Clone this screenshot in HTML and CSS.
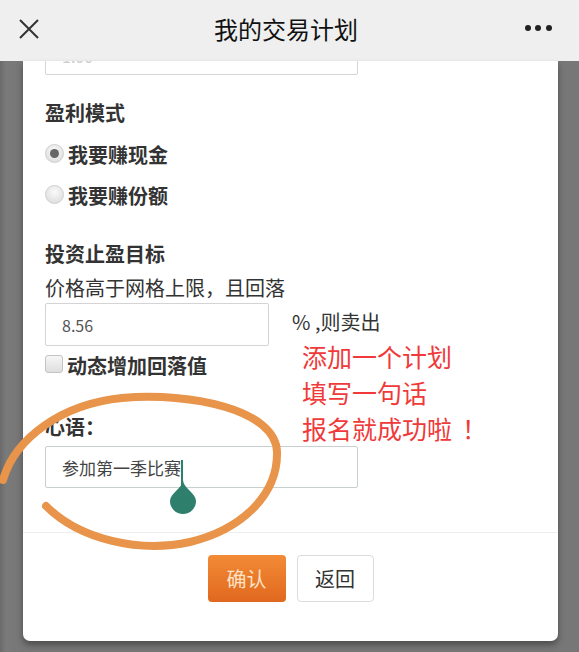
FILE: index.html
```html
<!DOCTYPE html>
<html lang="zh-CN">
<head>
  <meta charset="UTF-8" />
  <title>我的交易计划</title>
  <link rel="stylesheet" href="styles.css">
</head>
<body>
  <div class="page">

    <!-- 顶部导航 -->
    <header class="topbar">
      <svg class="icon-close" width="20" height="20" viewBox="0 0 20 20">
        <path d="M1 1 L19 19 M19 1 L1 19" stroke="#333" stroke-width="2" fill="none" />
      </svg>
      <div class="topbar-title">我的交易计划</div>
      <svg class="icon-more" width="28" height="8" viewBox="0 0 28 8">
        <circle cx="3" cy="4" r="3" fill="#222" />
        <circle cx="13" cy="4" r="3" fill="#222" />
        <circle cx="24" cy="4" r="3" fill="#222" />
      </svg>
    </header>

    <div class="stage">
      <div class="sheet">
        <div class="form">
          <div class="field field-wide field-top">1.00</div>

          <div class="label">盈利模式</div>
          <div class="choice-list">
            <div class="choice"><span class="radio radio-on"></span>我要赚现金</div>
            <div class="choice"><span class="radio"></span>我要赚份额</div>
          </div>

          <div class="label label-gap">投资止盈目标</div>
          <div class="hint">价格高于网格上限，且回落</div>
          <div class="price-row">
            <div class="field field-price">8.56</div>
            <span class="unit">% ,则卖出</span>
          </div>
          <div class="choice choice-check"><span class="check"></span>动态增加回落值</div>

          <div class="label label-gap2">心语：</div>
          <div class="field field-wide field-note">参加第一季比赛<span class="caret"></span></div>
        </div>

        <div class="actions">
          <button class="btn btn-ok">确认</button>
          <button class="btn btn-back">返回</button>
        </div>
      </div>
    </div>

    <!-- 标注 -->
    <div class="note">
      添加一个计划<br>
      填写一句话<br>
      报名就成功啦<span class="bang">！</span>
    </div>
    <svg class="ring" width="290" height="165" viewBox="0 390 290 165">
      <path d="M3 480 C 15 438, 62 404, 122 398 C 192 392, 276 410, 277 452 C 278 496, 240 530, 190 542 C 140 553, 80 540, 46 506"
            stroke="#e8944a" stroke-width="8" stroke-linecap="round" fill="none" />
    </svg>
    <svg class="drop" width="30" height="34" viewBox="0 0 30 34">
      <path d="M15 0 C 15 8, 28 13, 28 21 A 13 13 0 0 1 2 21 C 2 13, 15 8, 15 0 Z" fill="#2f7f6d" />
    </svg>

  </div>
</body>
</html>
```

FILE: styles.css
```css
html, body { margin: 0; padding: 0; }
body {
  font-family: "Noto Sans CJK SC", "Noto Sans", sans-serif;
  color: #333;
  background: #737373;
}
.page { position: relative; width: 579px; height: 652px; overflow: hidden; }

.topbar {
  height: 61px;
  background: #efefef;
  display: flex;
  align-items: center;
  justify-content: space-between;
  padding: 0 26px 0 19px;
  box-sizing: border-box;
}
.icon-close { margin-top: -4px; }
.icon-more { margin-top: -6px; }
.topbar-title { font-size: 24px; color: #111; margin-top: -4px; padding-left: 8px; }

.stage {
  height: 591px;
  padding: 0 21px 0 23px;
  box-sizing: border-box;
  background: linear-gradient(to right, #6a6a6a, #7a7a7a 6px, #777 20px);
}
.sheet {
  height: 580px;
  background: #fff;
  border-radius: 0 0 7px 7px;
  overflow: hidden;
  box-shadow: 0 4px 6px rgba(0, 0, 0, 0.35);
}
.form {
  display: flex;
  flex-direction: column;
  align-items: flex-start;
  padding: 0 22px 44px;
}

.field {
  box-sizing: border-box;
  border: 1px solid #d4d4d4;
  border-radius: 2px;
  background: #fff;
  display: flex;
  align-items: center;
  padding-left: 16px;
}
.field-wide { width: 313px; height: 42px; }
.field-top {
  margin-top: -28px;
  color: #ccc;
  font-size: 16px;
  align-items: flex-start;
  padding-top: 10px;
}
.field-price { width: 224px; height: 43px; font-size: 16px; color: #555; }
.field-note { margin-top: 7px; font-size: 17px; color: #444; border-color: #c9d0d0; }
.caret { display: inline-block; width: 1.5px; height: 27px; background: #2f7f6d; margin-top: 12px; }

.label { font-size: 20px; font-weight: bold; line-height: 24px; margin-top: 26px; }
.label-gap { margin-top: 34px; }
.label-gap2 { margin-top: 37px; }
.hint { font-size: 20px; line-height: 24px; margin-top: 10px; }

.choice-list { display: flex; flex-direction: column; gap: 17px; margin-top: 18px; }
.choice {
  display: flex;
  align-items: center;
  gap: 4px;
  font-size: 20px;
  font-weight: bold;
  line-height: 24px;
}
.radio {
  width: 19px;
  height: 19px;
  border-radius: 50%;
  box-sizing: border-box;
  border: 1px solid #cfcfcf;
  background: radial-gradient(circle at 50% 35%, #fafafa, #d8d8d8);
  display: flex;
  align-items: center;
  justify-content: center;
  margin-top: -4px;
}
.radio-on::after {
  content: "";
  width: 9px;
  height: 9px;
  border-radius: 50%;
  background: #666;
}
.check {
  width: 18px;
  height: 18px;
  box-sizing: border-box;
  border: 1px solid #c4c4c4;
  border-radius: 3px;
  background: linear-gradient(#f6f6f6, #dedede);
  margin-top: -5px;
}
.choice-check { margin-top: 8px; }

.price-row { display: flex; align-items: center; gap: 23px; margin-top: 3px; }
.unit { font-size: 20px; margin-top: -6px; }

.actions {
  border-top: 1px solid #eee;
  display: flex;
  justify-content: center;
  gap: 11px;
  padding-top: 22px;
}
.btn {
  height: 47px;
  border-radius: 4px;
  font-family: inherit;
  font-size: 20px;
  padding: 0;
}
.btn-ok {
  width: 78px;
  border: none;
  color: #fde3c6;
  background: linear-gradient(#f28b36, #e1681f);
}
.btn-back { width: 77px; border: 1px solid #dcdcdc; background: #fff; color: #333; }

.note {
  position: absolute;
  left: 302px;
  top: 338px;
  font-size: 25px;
  line-height: 36px;
  color: #f03a3a;
}
.bang { padding-left: 10px; }
.ring { position: absolute; left: 0; top: 390px; }
.drop { position: absolute; left: 168px; top: 480px; }
```
